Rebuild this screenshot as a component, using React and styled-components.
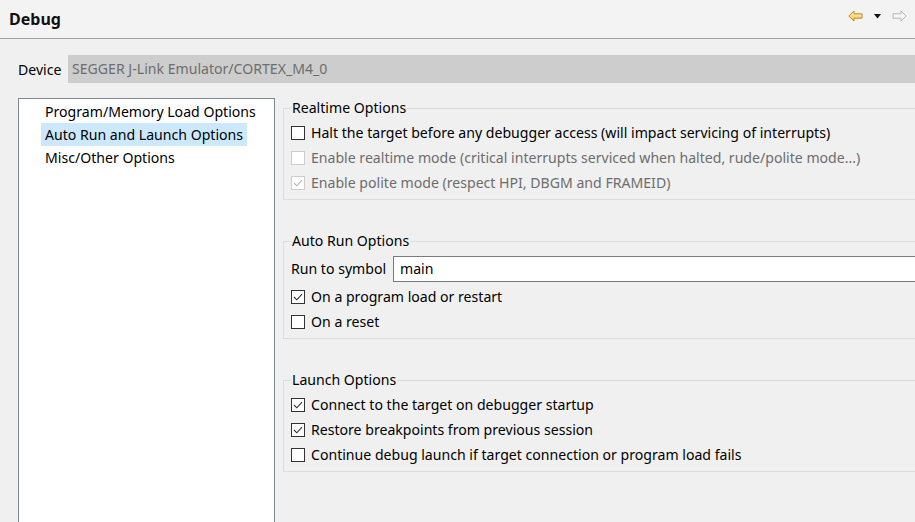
import React from 'react'
import styled, { createGlobalStyle } from 'styled-components'

const GlobalStyle = createGlobalStyle`
    body {
        margin: 0;
        background: #f0f0f0;
        font-family: "Noto Sans", "Open Sans", sans-serif;
        font-size: 14.1px;
        color: #000;
    }
`

const Frame = styled.div`
    width: 915px;
    height: 522px;
    overflow: hidden;
    background: #f0f0f0;
`

const Header = styled.div`
    box-sizing: border-box;
    height: 39px;
    display: flex;
    align-items: center;
    justify-content: space-between;
    padding: 0 8px 0 9px;
    background: #f3f3f3;
    border-bottom: 1px solid #a0a0a0;
`

const Title = styled.h1`
    margin: 0;
    font-size: 16px;
    font-weight: 700;
    color: #111;
`

const NavIcons = styled.div`
    display: flex;
    align-items: center;
    gap: 11px;
    margin-top: -6px;
`

const Body = styled.div`
    padding: 16px 0 0 18px;
`

const DeviceRow = styled.div`
    display: flex;
    align-items: center;
    height: 28px;
`

const DeviceLabel = styled.span`
    width: 50px;
    flex: none;
`

const DeviceField = styled.div`
    flex: none;
    width: 900px;
    height: 28px;
    line-height: 28px;
    padding-left: 4px;
    background: #cdcdcd;
    color: #6d6d6d;
`

const Main = styled.div`
    display: flex;
    gap: 8px;
    margin-top: 15px;
`

const Tree = styled.ul`
    box-sizing: border-box;
    flex: none;
    width: 257px;
    height: 440px;
    margin: 0;
    padding: 1px 0 0;
    list-style: none;
    background: #fff;
    border: 1px solid #828790;
    display: flex;
    flex-direction: column;
    align-items: flex-start;
`

const TreeItem = styled.li`
    height: 23px;
    line-height: 23px;
    margin-left: 22px;
    padding: 0 4px;
    white-space: nowrap;
    background: ${p => (p.selected ? '#cce8ff' : 'transparent')};
`

const Pane = styled.div`
    flex: none;
    width: 660px;
    display: flex;
    flex-direction: column;
    gap: 31px;
`

const Group = styled.fieldset`
    margin: 0;
    padding: 2px 7px 4px;
    border: 1px solid #dcdcdc;
    min-width: 0;
`

const Legend = styled.legend`
    padding: 0 1px;
    height: 20px;
    line-height: 20px;
`

const Row = styled.label`
    display: flex;
    align-items: center;
    gap: 6px;
    height: 25px;
    white-space: nowrap;
    color: ${p => (p.disabled ? '#6d6d6d' : '#000')};
`

const Box = styled.span`
    box-sizing: border-box;
    flex: none;
    width: 14px;
    height: 14px;
    background: #fff;
    border: 1px solid ${p => (p.disabled ? '#cccccc' : '#333')};
    display: flex;
    align-items: center;
    justify-content: center;
`

const SymbolRow = styled.div`
    display: flex;
    align-items: center;
    height: 31px;
`

const SymbolLabel = styled.span`
    width: 102px;
    flex: none;
`

const SymbolInput = styled.div`
    box-sizing: border-box;
    flex: none;
    width: 560px;
    height: 26px;
    line-height: 24px;
    padding-left: 6px;
    background: #fff;
    border: 1px solid #7a7a7a;
`

const Check = ({ checked, disabled, children }) => (
    <Row disabled={disabled}>
        <Box disabled={disabled}>
            {checked && (
                <svg width="10" height="8" viewBox="0 0 10 8">
                    <path d="M1 4 L3.8 6.8 L9 1.2" fill="none" stroke={disabled ? '#b5b5b5' : '#333'} strokeWidth="1.1" />
                </svg>
            )}
        </Box>
        <span>{children}</span>
    </Row>
)

const BackIcon = () => (
    <svg width="15" height="12" viewBox="0 0 15 12">
        <defs>
            <linearGradient id="bk" x1="0" y1="0" x2="0" y2="1">
                <stop offset="0" stopColor="#fff1c8" />
                <stop offset="1" stopColor="#f3c25a" />
            </linearGradient>
        </defs>
        <path d="M0.8 6 L6 1 L6 3.8 L14 3.8 L14 8.2 L6 8.2 L6 11 Z" fill="url(#bk)" stroke="#c98a1d" strokeWidth="1" strokeLinejoin="round" />
    </svg>
)

const MenuIcon = () => (
    <svg width="7" height="5" viewBox="0 0 7 5">
        <path d="M0 0 L7 0 L3.5 4.5 Z" fill="#111" />
    </svg>
)

const ForwardIcon = () => (
    <svg width="15" height="12" viewBox="0 0 15 12">
        <path d="M14.2 6 L9 1 L9 3.8 L1 3.8 L1 8.2 L9 8.2 L9 11 Z" fill="#f7f7f7" stroke="#b4b4b4" strokeWidth="1" strokeLinejoin="round" />
    </svg>
)

const App = () => {
    const treeItems = ['Program/Memory Load Options', 'Auto Run and Launch Options', 'Misc/Other Options']

    return (
        <Frame>
            <GlobalStyle />
            <Header>
                <Title>Debug</Title>
                <NavIcons>
                    <BackIcon />
                    <MenuIcon />
                    <ForwardIcon />
                </NavIcons>
            </Header>
            <Body>
                <DeviceRow>
                    <DeviceLabel>Device</DeviceLabel>
                    <DeviceField>SEGGER J-Link Emulator/CORTEX_M4_0</DeviceField>
                </DeviceRow>
                <Main>
                    <Tree>
                        {treeItems.map((item, i) => (
                            <TreeItem key={item} selected={i === 1}>{item}</TreeItem>
                        ))}
                    </Tree>
                    <Pane>
                        <Group>
                            <Legend>Realtime Options</Legend>
                            <Check>Halt the target before any debugger access (will impact servicing of interrupts)</Check>
                            <Check disabled>Enable realtime mode (critical interrupts serviced when halted, rude/polite mode...)</Check>
                            <Check checked disabled>Enable polite mode (respect HPI, DBGM and FRAMEID)</Check>
                        </Group>
                        <Group>
                            <Legend>Auto Run Options</Legend>
                            <SymbolRow>
                                <SymbolLabel>Run to symbol</SymbolLabel>
                                <SymbolInput>main</SymbolInput>
                            </SymbolRow>
                            <Check checked>On a program load or restart</Check>
                            <Check>On a reset</Check>
                        </Group>
                        <Group>
                            <Legend>Launch Options</Legend>
                            <Check checked>Connect to the target on debugger startup</Check>
                            <Check checked>Restore breakpoints from previous session</Check>
                            <Check>Continue debug launch if target connection or program load fails</Check>
                        </Group>
                    </Pane>
                </Main>
            </Body>
        </Frame>
    )
}

export default App
